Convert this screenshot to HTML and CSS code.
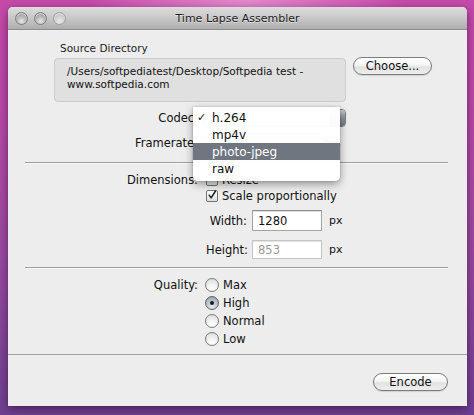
FILE: index.html
```html
<!DOCTYPE html>
<html>
<head>
<meta charset="utf-8">
<link rel="stylesheet" href="styles.css">
</head>
<body>
<div class="window">
  <div class="titlebar">
    <div class="lights">
      <span class="light"></span><span class="light"></span><span class="light dim"></span>
    </div>
    <div class="title">Time Lapse Assembler</div>
    <div></div>
  </div>
  <div class="content">
    <div class="source">
      <div class="source-col">
        <div class="small-label">Source Directory</div>
        <div class="pathbox">/Users/softpediatest/Desktop/Softpedia test -<br>www.softpedia.com</div>
      </div>
      <div class="button choose">Choose...</div>
    </div>

    <div class="row codec-row">
      <div class="label">Codec:</div>
      <div class="popup"><span class="popup-text"></span><span class="popup-arrows"></span></div>
    </div>
    <div class="row frame-row">
      <div class="label">Framerate:</div>
      <div class="inline">
        <div class="field frame-field"></div>
        <span class="unit">fps</span>
      </div>
    </div>

    <div class="sep"></div>

    <div class="row check-row">
      <div class="label">Dimensions:</div>
      <div class="check-item"><span class="checkbox"></span><span>Resize</span></div>
    </div>
    <div class="row check-row">
      <div></div>
      <div class="check-item"><span class="checkbox checked"><svg viewBox="0 0 12 12" width="12" height="12"><path d="M2.6 6.2 L5 9.4 L10.2 1.2" fill="none" stroke="#1a1a1a" stroke-width="1.7" stroke-linecap="round" stroke-linejoin="round"/></svg></span><span>Scale proportionally</span></div>
    </div>
    <div class="row size-row first">
      <div></div>
      <div class="size">
        <span class="size-label">Width:</span>
        <div class="field size-field">1280</div>
        <span class="unit">px</span>
      </div>
    </div>
    <div class="row size-row">
      <div></div>
      <div class="size">
        <span class="size-label">Height:</span>
        <div class="field size-field disabled">853</div>
        <span class="unit">px</span>
      </div>
    </div>

    <div class="sep"></div>

    <div class="row radio-row first">
      <div class="label">Quality:</div>
      <div class="radio-item"><span class="radio"></span><span>Max</span></div>
    </div>
    <div class="row radio-row">
      <div></div>
      <div class="radio-item"><span class="radio on"></span><span>High</span></div>
    </div>
    <div class="row radio-row">
      <div></div>
      <div class="radio-item"><span class="radio"></span><span>Normal</span></div>
    </div>
    <div class="row radio-row">
      <div></div>
      <div class="radio-item"><span class="radio"></span><span>Low</span></div>
    </div>
  </div>
  <div class="footer">
    <div class="button encode">Encode</div>
  </div>

  <div class="menu">
    <div class="menu-item"><span class="tick">✓</span><span>h.264</span></div>
    <div class="menu-item"><span class="tick"></span><span>mp4v</span></div>
    <div class="menu-item hl"><span class="tick"></span><span>photo-jpeg</span></div>
    <div class="menu-item"><span class="tick"></span><span>raw</span></div>
  </div>
</div>
</body>
</html>
```
FILE: styles.css
```css
html, body {
  margin: 0;
  padding: 0;
}
body {
  width: 474px;
  height: 415px;
  overflow: hidden;
  font-family: "DejaVu Sans", "Liberation Sans", sans-serif;
  font-size: 11.5px;
  color: #111;
  background:
    radial-gradient(ellipse 160px 60px at 245px 0px, rgba(255,190,235,0.55), rgba(255,190,235,0) 100%),
    linear-gradient(180deg, #c64aa9 0%, #b64aa6 30%, #9a4a9f 60%, #6e4090 100%);
}
.window {
  position: relative;
  margin: 7px 0 0 8px;
  width: 459px;
  height: 399px;
  background: #ededed;
  border-radius: 5px 5px 0 0;
  box-shadow: 0 3px 10px rgba(40, 0, 50, 0.55);
  display: flex;
  flex-direction: column;
}
.titlebar {
  height: 23px;
  display: grid;
  grid-template-columns: 1fr auto 1fr;
  align-items: center;
  background: linear-gradient(180deg, #dcdcdc 0%, #c8c8c8 50%, #adadad 100%);
  border-radius: 5px 5px 0 0;
  border-bottom: 1px solid #8e8e8e;
  box-sizing: border-box;
}
.lights {
  display: flex;
  gap: 6px;
  padding-left: 7px;
}
.light {
  width: 13px;
  height: 13px;
  border-radius: 50%;
  box-sizing: border-box;
  border: 1px solid #7d7d7d;
  background: radial-gradient(circle at 50% 75%, #e8e8e8 0%, #b8b8b8 45%, #8f8f8f 100%);
  box-shadow: inset 0 1px 1px rgba(255,255,255,0.6);
}
.light.dim {
  border-color: #a0a0a0;
  background: radial-gradient(circle at 50% 75%, #e8e8e8 0%, #cfcfcf 50%, #b5b5b5 100%);
}
.title {
  font-size: 11px;
  color: #1d1d1d;
  text-shadow: 0 1px 0 rgba(255,255,255,0.5);
}
.content {
  padding-top: 12px;
  flex: 0 0 auto;
}
.source {
  display: flex;
  padding-left: 46px;
  gap: 7px;
}
.source-col {
  display: flex;
  flex-direction: column;
}
.small-label {
  font-size: 10.5px;
  line-height: 13px;
  padding-left: 6px;
  margin-bottom: 3px;
  color: #222;
}
.pathbox {
  width: 292px;
  height: 44px;
  box-sizing: border-box;
  background: #e0e0e0;
  border: 1px solid #cbcbcb;
  border-radius: 4px;
  padding: 6px 0 0 12px;
  font-size: 10.5px;
  line-height: 13px;
  color: #111;
}
.button {
  height: 18px;
  box-sizing: border-box;
  border: 1px solid #7b7b7b;
  border-radius: 9px;
  background: linear-gradient(180deg, #ffffff 0%, #f4f4f4 45%, #e2e2e2 55%, #eeeeee 100%);
  box-shadow: 0 1px 1px rgba(0,0,0,0.12);
  display: flex;
  align-items: center;
  justify-content: center;
  font-size: 11.5px;
  color: #111;
}
.choose {
  width: 79px;
  margin-top: 15px;
}
.row {
  display: grid;
  grid-template-columns: 190px 1fr;
  column-gap: 8px;
  align-items: center;
}
.label {
  text-align: right;
}
.codec-row {
  margin-top: 7px;
  height: 18px;
}
.popup {
  margin-left: -3px;
  width: 143px;
  height: 18px;
  box-sizing: border-box;
  border: 1px solid #7e7e7e;
  border-radius: 4px;
  background: linear-gradient(180deg, #ffffff 0%, #f1f1f1 50%, #e4e4e4 100%);
  display: flex;
  align-items: center;
  overflow: hidden;
}
.popup-text {
  flex: 1;
  padding-left: 8px;
}
.popup-arrows {
  width: 16px;
  height: 100%;
  background: linear-gradient(180deg, #c5cbd3 0%, #8d96a2 50%, #6e7784 100%);
}
.frame-row {
  margin-top: 5px;
  height: 22px;
}
.inline {
  display: flex;
  align-items: center;
  gap: 6px;
}
.field {
  height: 21px;
  box-sizing: border-box;
  background: #fff;
  border: 1px solid #a3a3a3;
  border-top-color: #8a8a8a;
  box-shadow: inset 0 1px 1px rgba(0,0,0,0.12);
  padding: 0 5px;
  display: flex;
  align-items: center;
  font-size: 11.5px;
}
.frame-field {
  width: 112px;
}
.unit {
  font-size: 11px;
}
.sep {
  height: 1px;
  background: #9f9f9f;
  margin: 8px 19px 0 17px;
  box-shadow: 0 1px 0 #f8f8f8;
}
.check-row {
  height: 16px;
}
.sep + .check-row {
  margin-top: 9px;
}
.check-item, .radio-item {
  display: flex;
  align-items: center;
  gap: 4px;
}
.checkbox {
  width: 12px;
  height: 12px;
  box-sizing: border-box;
  border: 1px solid #747474;
  border-radius: 2px;
  background: linear-gradient(180deg, #ffffff 0%, #f0f0f0 50%, #dcdcdc 100%);
  display: flex;
}
.checkbox svg {
  margin: -2px 0 0 0;
}
.size-row.first {
  margin-top: 6px;
}
.size-row + .size-row {
  margin-top: 9px;
}
.size {
  display: flex;
  align-items: center;
}
.size-label {
  width: 41px;
  text-align: right;
  margin-right: 5px;
  white-space: nowrap;
}
.size-field {
  width: 70px;
  margin-right: 7px;
}
.size-row + .size-row .size-field {
  height: 19px;
}
.disabled {
  color: #9a9a9a;
  border-color: #c4c4c4;
}
.radio-row {
  height: 18px;
}
.radio-row.first {
  margin-top: 8px;
}
.radio {
  width: 14px;
  height: 14px;
  box-sizing: border-box;
  border-radius: 50%;
  border: 1px solid #7a7a7a;
  background: radial-gradient(circle at 50% 80%, #ffffff 0%, #f2f2f2 40%, #d6d6d6 100%);
  margin-left: -1px;
  display: flex;
  align-items: center;
  justify-content: center;
}
.radio.on {
  background: radial-gradient(circle at 50% 80%, #e6e9ee 0%, #b4bac2 60%, #8e959f 100%);
  border-color: #5f646b;
}
.radio.on::after {
  content: "";
  width: 4px;
  height: 4px;
  border-radius: 50%;
  background: #1a1a1a;
}
.footer {
  margin-top: 6px;
  border-top: 1px solid #a0a0a0;
  flex: 1;
  display: flex;
  justify-content: flex-end;
  align-items: flex-start;
  padding: 18px 19px 0 0;
}
.encode {
  width: 75px;
}
.menu {
  position: absolute;
  left: 185px;
  top: 100px;
  width: 147px;
  padding: 2px 0 4px;
  background: rgba(255, 255, 255, 0.97);
  border-radius: 0 0 5px 5px;
  box-shadow: 0 3px 8px rgba(0, 0, 0, 0.4), 0 0 0 1px rgba(0,0,0,0.06);
}
.menu-item {
  height: 17px;
  display: flex;
  align-items: center;
  font-size: 12px;
  color: #111;
}
.tick {
  width: 19px;
  padding-left: 4px;
  box-sizing: border-box;
  font-size: 11px;
}
.menu-item.hl {
  background: #6f7680;
  color: #fff;
}
```
